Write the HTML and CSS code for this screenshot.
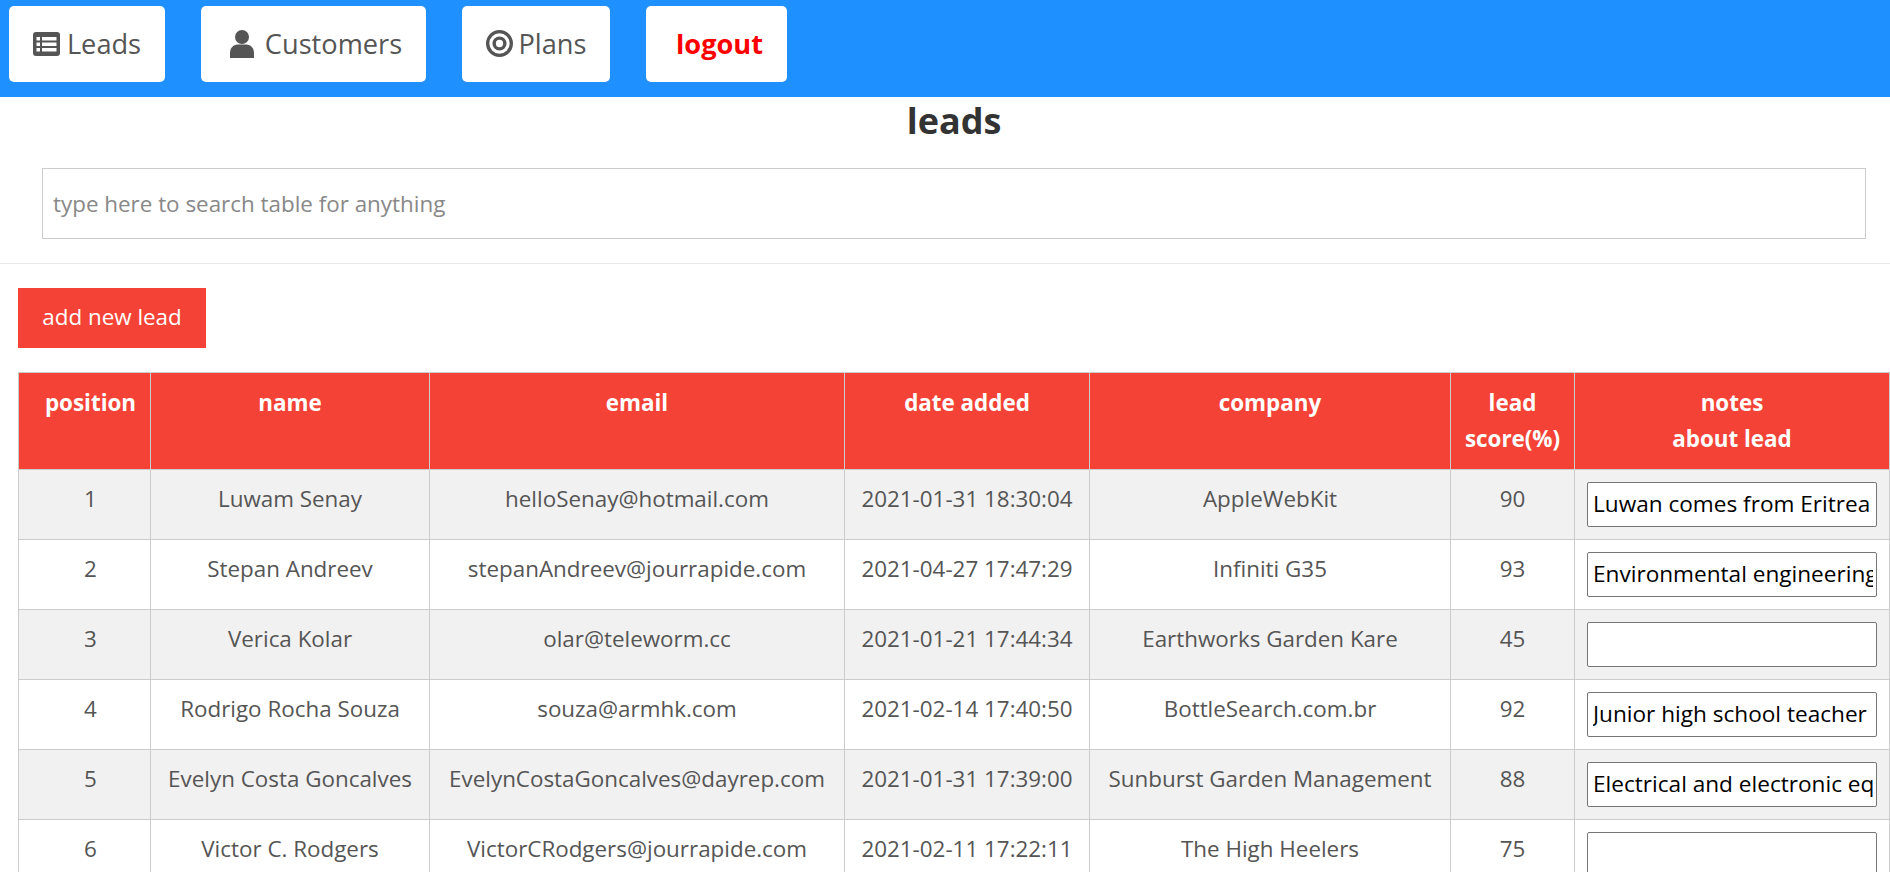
FILE: index.html
```html
<!DOCTYPE html>
<html lang="en">
<head>
<meta charset="utf-8">
<title>leads</title>
<link rel="stylesheet" href="styles.css">
</head>
<body>
<nav class="topbar">
  <a class="nav-btn nav-leads" href="#"><svg class="icon icon-list" viewBox="0 0 27 24"><path fill-rule="evenodd" d="M3 0h21a3 3 0 0 1 3 3v18a3 3 0 0 1-3 3H3a3 3 0 0 1-3-3V3a3 3 0 0 1 3-3zM3.500 5v3.500h3.500V5zm0 5.500V14h3.500v-3.500zm0 5.500v3.500h3.500V16zM9 5v3.500h14.500V5zm0 5.500V14h14.500v-3.500zm0 5.500v3.500h14.500V16z"/></svg>Leads</a>
  <a class="nav-btn nav-customers" href="#"><svg class="icon icon-user" viewBox="0 0 24 28"><circle cx="12" cy="7" r="7"/><path d="M0 28v-5c0-5 3.500-8.500 7.500-8.500h9c4 0 7.500 3.500 7.500 8.500v5z"/></svg>Customers</a>
  <a class="nav-btn nav-plans" href="#"><svg class="icon icon-target" viewBox="0 0 26 26"><path fill-rule="evenodd" d="M13 0a13 13 0 1 1 0 26 13 13 0 0 1 0-26zm0 3.200a9.800 9.800 0 1 0 0 19.600 9.800 9.800 0 0 0 0-19.600zm0 3a6.800 6.800 0 1 1 0 13.600 6.800 6.800 0 0 1 0-13.600zm0 3.300a3.500 3.500 0 1 0 0 7 3.500 3.500 0 0 0 0-7z"/></svg>Plans</a>
  <a class="nav-btn nav-logout" href="#">logout</a>
</nav>
<main>
  <h2 class="title">leads</h2>
  <div class="search-wrap"><input class="search" type="text" placeholder="type here to search table for anything"></div>
  <hr class="divider">
  <button class="add-btn" type="button">add new lead</button>
  <table class="leads">
    <colgroup><col class="c1"><col class="c2"><col class="c3"><col class="c4"><col class="c5"><col class="c6"><col class="c7"></colgroup>
    <thead>
      <tr><th>position</th><th>name</th><th>email</th><th>date added</th><th>company</th><th>lead score(%)</th><th>notes<br>about lead</th></tr>
    </thead>
    <tbody>
      <tr><td>1</td><td>Luwam Senay</td><td>helloSenay@hotmail.com</td><td>2021-01-31 18:30:04</td><td>AppleWebKit</td><td>90</td><td><input class="note" type="text" value="Luwan comes from Eritrea"></td></tr>
      <tr><td>2</td><td>Stepan Andreev</td><td>stepanAndreev@jourrapide.com</td><td>2021-04-27 17:47:29</td><td>Infiniti G35</td><td>93</td><td><input class="note" type="text" value="Environmental engineering technician"></td></tr>
      <tr><td>3</td><td>Verica Kolar</td><td>olar@teleworm.cc</td><td>2021-01-21 17:44:34</td><td>Earthworks Garden Kare</td><td>45</td><td><input class="note" type="text" value=""></td></tr>
      <tr><td>4</td><td>Rodrigo Rocha Souza</td><td>souza@armhk.com</td><td>2021-02-14 17:40:50</td><td>BottleSearch.com.br</td><td>92</td><td><input class="note" type="text" value="Junior high school teacher"></td></tr>
      <tr><td>5</td><td>Evelyn Costa Goncalves</td><td>EvelynCostaGoncalves@dayrep.com</td><td>2021-01-31 17:39:00</td><td>Sunburst Garden Management</td><td>88</td><td><input class="note" type="text" value="Electrical and electronic equipment"></td></tr>
      <tr><td>6</td><td>Victor C. Rodgers</td><td>VictorCRodgers@jourrapide.com</td><td>2021-02-11 17:22:11</td><td>The High Heelers</td><td>75</td><td><input class="note" type="text" value=""></td></tr>
    </tbody>
  </table>
</main>
</body>
</html>
```
FILE: styles.css
```css
html, body { margin: 0; padding: 0; height: 872px; overflow: hidden; background: #fff; }
body { font-family: "Open Sans", sans-serif; font-size: 22.4px; color: #555; }
* { box-sizing: border-box; }
.topbar { background: #1e90ff; height: 97px; display: flex; align-items: flex-start; gap: 36px; padding: 6px 0 0 9px; }
.nav-btn { background: #fff; border-radius: 5px; height: 76px; padding-bottom: 1px; display: flex; align-items: center; justify-content: center; font-size: 27.2px; color: #555; text-decoration: none; gap: 7px; }
.nav-leads { width: 156px; }
.nav-customers { width: 225px; gap: 11px; padding-left: 5px; }
.nav-plans { width: 148px; gap: 6px; }
.nav-logout { width: 141px; color: #f00; font-weight: 700; padding-left: 6px; }
.icon { fill: #555; flex: none; }
.icon-list { width: 27px; height: 24px; }
.icon-user { width: 24px; height: 28px; }
.icon-target { width: 27px; height: 27px; }
.title { margin: 0; text-align: center; font-size: 36px; line-height: 47px; height: 71px; font-weight: 700; color: #333; padding-left: 18px; }
.search-wrap { padding: 0 24px 0 42px; }
.search { display: block; width: 100%; height: 71px; border: 1px solid #ccc; padding: 8px 10px; font: 22.4px "Open Sans", sans-serif; color: #555; background: #fff; outline: 0; }
.search::placeholder { color: #888; opacity: 1; }
.divider { border: 0; border-top: 1px solid #e6e6e6; margin: 24px 0; height: 1px; }
.add-btn { display: block; margin-left: 18px; width: 188px; height: 60px; border: 0; background: #f44336; color: #fff; font: 22.4px "Open Sans", sans-serif; padding: 0 0 3px; }
.leads { margin: 24px 0 0 18px; table-layout: fixed; width: 1871px; border-collapse: collapse; }
.c1 { width: 132px; } .c2 { width: 279px; } .c3 { width: 415px; } .c4 { width: 245px; }
.c5 { width: 361px; } .c6 { width: 124px; } .c7 { width: 315px; }
.leads th, .leads td { border: 1px solid #ccc; padding: 11px 12px 13px; text-align: center; vertical-align: top; line-height: 36px; }
.leads th:first-child, .leads td:first-child { padding-left: 24px; }
.leads th { background: #f44336; color: #fff; font-weight: 700; padding-top: 12px; padding-bottom: 12px; }
.leads td { height: 70px; white-space: nowrap; }
.leads td:last-child { padding-top: 12px; padding-bottom: 12px; }
.leads tbody tr:nth-child(odd) td { background: #f1f1f1; }
.note { display: block; width: 100%; height: 45px; border: 1px solid #767676; border-radius: 2px; padding: 0 3px 2px 5px; font: 22.6px "Open Sans", sans-serif; color: #000; background: #fff; }
```
